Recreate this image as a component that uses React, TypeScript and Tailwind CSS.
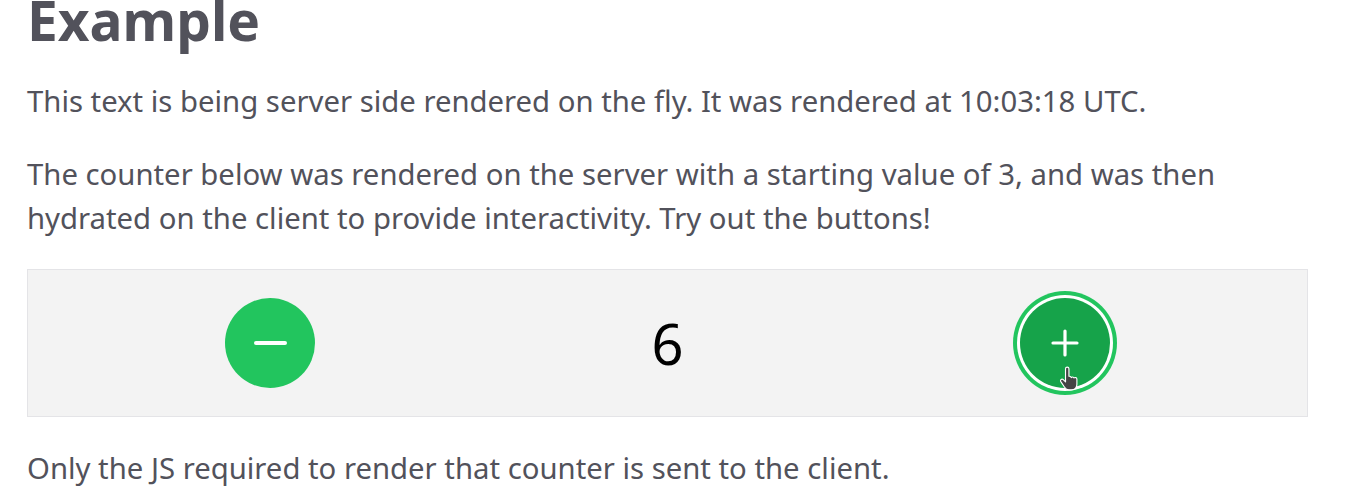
import React from 'react';

const font = { fontFamily: '"Noto Sans", "Open Sans", sans-serif' };

const HandCursor: React.FC = () => (
  <svg className="absolute left-[38px] top-[68px]" width="23" height="25" viewBox="0 0 19 22">
    <path
      d="M6 2.5a1.5 1.5 0 0 1 3 0V9h.5a1.5 1.5 0 0 1 1.5 1.2 1.5 1.5 0 0 1 2.5.3 1.5 1.5 0 0 1 2.5 1V16c0 3-2 5-5 5H9c-2 0-3-1-4-2.5L2 14a1.4 1.4 0 0 1 2-2l2 2z"
      fill="#444"
      stroke="#fff"
      strokeWidth="1"
      strokeLinejoin="round"
    />
  </svg>
);

const App: React.FC = () => (
  <div className="min-h-screen bg-white pl-[27px] text-[#52525b]" style={font}>
    <h1 className="mt-[-8px] text-[55px] font-bold leading-none">Example</h1>
    <p className="mt-[32px] text-[29.3px] leading-[44px]">
      This text is being server side rendered on the fly. It was rendered at 10:03:18 UTC.
    </p>
    <p className="mt-[28.5px] w-[1260px] text-[29.3px] leading-[44px]">
      The counter below was rendered on the server with a starting value of 3, and was then
      hydrated on the client to provide interactivity. Try out the buttons!
    </p>
    <div className="mt-[29.4px] flex h-[148px] w-[1281px] items-center justify-between border border-[#e4e4e7] bg-[#f3f3f3] px-[197px]">
      <button className="flex h-[90px] w-[90px] items-center justify-center rounded-full bg-[#22c55e]">
        <span className="block h-[4px] w-[33px] rounded-full bg-white" />
      </button>
      <span className="text-[56px] leading-none text-black">6</span>
      <button className="relative flex h-[90px] w-[90px] items-center justify-center rounded-full bg-[#16a34a] ring-4 ring-[#22c55e] ring-offset-3 ring-offset-white">
        <svg width="28" height="28" viewBox="0 0 28 28" stroke="#fff" strokeWidth="3.2" strokeLinecap="round">
          <path d="M14 2v24M2 14h24" />
        </svg>
        <HandCursor />
      </button>
    </div>
    <p className="mt-[29.6px] text-[29.3px] leading-[44px]">
      Only the JS required to render that counter is sent to the client.
    </p>
  </div>
);

export default App;
